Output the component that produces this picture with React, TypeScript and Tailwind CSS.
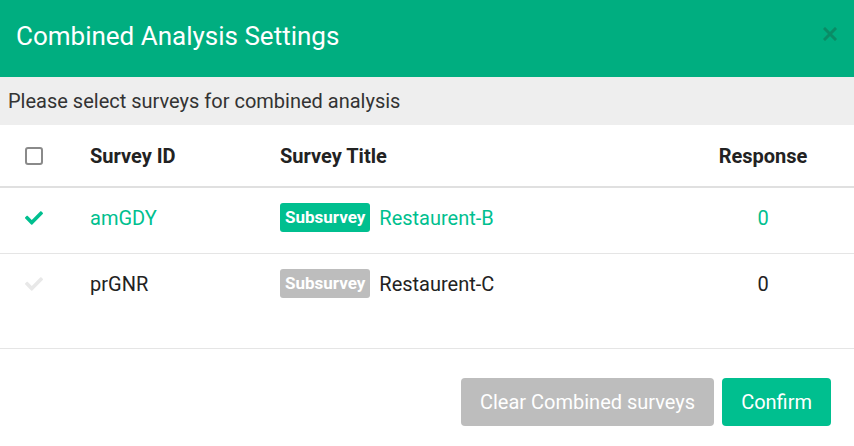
import React from "react";
import { FaCheck } from "react-icons/fa";

const rows = [
  { id: "amGDY", title: "Restaurent-B", resp: "0", selected: true },
  { id: "prGNR", title: "Restaurent-C", resp: "0", selected: false },
];

export default function App() {
  return (
    <div className="w-[854px] h-[446px] bg-white overflow-hidden" style={{ fontFamily: "Roboto, 'Noto Sans', sans-serif" }}>
      <div className="h-[77px] bg-[#00ae80] flex items-center justify-between pl-4 pr-[17px] pb-[5px]">
        <div className="text-[26px] text-white">Combined Analysis Settings</div>
        <svg width="14" height="14" viewBox="0 0 14 14" className="mt-[-5px]">
          <path d="M2 2 L12 12 M12 2 L2 12" stroke="#0a8c66" strokeWidth="3" strokeLinecap="square" />
        </svg>
      </div>
      <div className="h-[48px] bg-[#eeeeee] flex items-center px-2 text-[20px] text-[#333]">
        Please select surveys for combined analysis
      </div>
      <div className="h-[63px] flex items-center pl-[25px] pr-[23px] border-b-2 border-[#e0e0e0] text-[20px] font-bold text-[#222]">
        <div className="w-[65px] flex items-center">
          <div className="w-[18px] h-[18px] border-2 border-[#8a8a8a] rounded-[3px]" />
        </div>
        <div className="w-[190px]">Survey ID</div>
        <div className="flex-1">Survey Title</div>
        <div className="w-[136px] text-center">Response</div>
      </div>
      <div className="h-[161px] border-b border-[#e5e5e5]">
        {rows.map((r, i) => (
          <div
            key={r.id}
            className={`h-[66px] flex items-start pt-[15px] pl-[25px] pr-[23px] text-[20px] ${i === 0 ? "border-b border-[#e5e5e5]" : ""} ${r.selected ? "text-[#00bf8f]" : "text-[#222]"}`}
          >
            <div className="w-[65px] h-[29px] flex items-center">
              <FaCheck size={18} className={r.selected ? "text-[#00bf8f]" : "text-[#e8e8e8]"} />
            </div>
            <div className="w-[190px] h-[29px] flex items-center">{r.id}</div>
            <div className="flex-1 h-[29px] flex items-center gap-[9px]">
              <span className={`h-[29px] px-[5px] flex items-center rounded-[3px] text-white text-[17px] font-bold ${r.selected ? "bg-[#00bf8f]" : "bg-[#bdbdbd]"}`}>
                Subsurvey
              </span>
              <span>{r.title}</span>
            </div>
            <div className="w-[136px] h-[29px] flex items-center justify-center">{r.resp}</div>
          </div>
        ))}
      </div>
      <div className="flex justify-end gap-2 pt-[29px] pr-[23px]">
        <button className="h-[48px] px-[19px] bg-[#bdbdbd] text-white text-[20px] rounded-[4px]">Clear Combined surveys</button>
        <button className="h-[48px] px-[19px] bg-[#00bf8f] text-white text-[20px] rounded-[4px]">Confirm</button>
      </div>
    </div>
  );
}
